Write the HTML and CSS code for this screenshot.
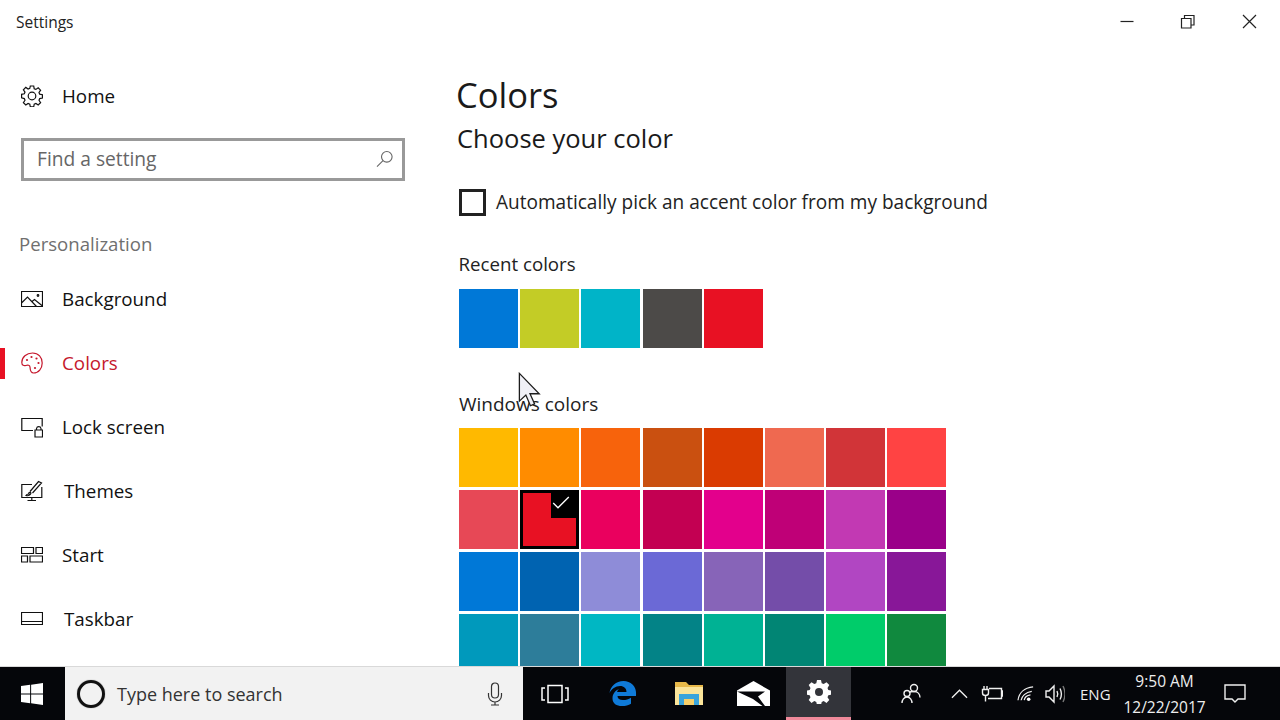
FILE: index.html
```html
<!DOCTYPE html>
<html lang="en">
<head>
<meta charset="utf-8">
<title>Settings</title>
<link rel="stylesheet" href="styles.css">
</head>
<body>
<div class="screen">
  <div class="window">
    <header class="titlebar">
      <span class="app-title">Settings</span>
      <div class="win-controls">
        <svg class="win-btn" viewBox="0 0 62 45"><path d="M26.500 22.500h13" /></svg>
        <svg class="win-btn" viewBox="0 0 62 45"><path d="M25.500 19.500h9.500v9.500h-9.500zM28.500 19v-2.500h9.500v9.500h-3" /></svg>
        <svg class="win-btn" viewBox="0 0 62 45"><path d="M25 16l13 13M38 16l-13 13" /></svg>
      </div>
    </header>
    <div class="body">
      <nav class="sidebar">
        <div class="nav-item home">
          <svg class="nav-icon" viewBox="0 0 22 22"><path d="M9.300 1h3.400l.5 2.700 1.700.7 2.300-1.600 2.400 2.400-1.600 2.300.7 1.700 2.700.5v3.400l-2.700.5-.7 1.700 1.600 2.300-2.400 2.400-2.300-1.600-1.700.7-.5 2.700H9.300l-.5-2.700-1.700-.7-2.300 1.600-2.400-2.400 1.600-2.300-.7-1.700L.6 12.700V9.300l2.700-.5.7-1.700-1.600-2.300 2.400-2.400 2.300 1.600 1.700-.7z"/><circle cx="11" cy="11" r="3.800"/></svg>
          <span>Home</span>
        </div>
        <div class="search">
          <span class="search-text">Find a setting</span>
          <svg class="search-icon" viewBox="0 0 18 18"><circle cx="10.800" cy="6.800" r="5.300"/><path d="M7 10.600L1 16.600"/></svg>
        </div>
        <div class="section-label">Personalization</div>
        <div class="nav-item">
          <svg class="nav-icon" viewBox="0 0 22 22"><path d="M.5 3.500h21v15H.5zM.5 15l6-6 9 9.500M11 13.500l2.500-2 8 6.500"/><circle cx="17" cy="7.500" r=".8"/></svg>
          <span>Background</span>
        </div>
        <div class="nav-item active">
          <svg class="nav-icon" viewBox="0 0 22 22"><path d="M11.500 1C5.500 1 .8 5 .8 10.500c0 3 2.400 3.500 4 3 2-.6 4-.5 4.200 1.500.2 2 0 6 3.500 6 5 0 8.700-4.500 8.700-10S17.500 1 11.500 1z"/><circle cx="6" cy="8" r="1.100" class="dot"/><circle cx="10.500" cy="5" r="1.100" class="dot"/><circle cx="15.500" cy="6.500" r="1.100" class="dot"/><circle cx="17.500" cy="11" r="1.100" class="dot"/><circle cx="14" cy="16" r="1.100" class="dot"/></svg>
          <span>Colors</span>
        </div>
        <div class="nav-item">
          <svg class="nav-icon" viewBox="0 0 22 22"><path d="M12 14.500H.8V2.500h20.400v8"/><path d="M14 14h7.500v7H14zM15.500 14v-1.500a2.300 2.300 0 0 1 4.500 0V14"/></svg>
          <span>Lock screen</span>
        </div>
        <div class="nav-item themes">
          <svg class="nav-icon" viewBox="0 0 22 22"><path d="M11 4.500H.8v13h20V7M10.800 17.500v3M6.500 20.500h8.500"/><path d="M8 14c-2 0-2.800 1-3 1.500 1 .3 3.500 0 4.500-1.300 1-1.200 0-2.400-1.200-1.600-.7.500-.8 1-.3 1.400zM9 11.500l8.500-10 3 1.500-9 10"/></svg>
          <span>Themes</span>
        </div>
        <div class="nav-item">
          <svg class="nav-icon" viewBox="0 0 22 22"><path d="M.5 3.500h12v6H.5zM15 3.500h6.500v6H15zM.5 12h6v6h-6zM9 12h12.500v6H9z"/></svg>
          <span>Start</span>
        </div>
        <div class="nav-item taskbar-item">
          <svg class="nav-icon" viewBox="0 0 22 22"><path d="M.5 4.500h21v12H.5zM.5 13.500h21"/></svg>
          <span>Taskbar</span>
        </div>
      </nav>
      <main class="content">
        <h1>Colors</h1>
        <h2>Choose your color</h2>
        <label class="auto-row">
          <span class="checkbox"></span>
          <span>Automatically pick an accent color from my background</span>
        </label>
        <div class="label recent-label">Recent colors</div>
        <div class="recent">
          <i style="background:#0078d7"></i><i style="background:#c3cc26"></i><i style="background:#00b4c8"></i><i style="background:#4c4a48"></i><i style="background:#e81123"></i>
        </div>
        <div class="label windows-label">Windows colors</div>
        <div class="palette">
          <i style="background:#ffb900"></i><i style="background:#ff8c00"></i><i style="background:#f7630c"></i><i style="background:#ca5010"></i><i style="background:#da3b01"></i><i style="background:#ef6950"></i><i style="background:#d13438"></i><i style="background:#ff4343"></i>
          <i style="background:#e74856"></i>
          <i class="selected"><b></b><svg viewBox="0 0 30 30"><path d="M2 15l8 8L28 5" /></svg></i>
          <i style="background:#ea005e"></i><i style="background:#c30052"></i><i style="background:#e3008c"></i><i style="background:#bf0077"></i><i style="background:#c239b3"></i><i style="background:#9a0089"></i>
          <i style="background:#0078d7"></i><i style="background:#0063b1"></i><i style="background:#8e8cd8"></i><i style="background:#6b69d6"></i><i style="background:#8764b8"></i><i style="background:#744da9"></i><i style="background:#b146c2"></i><i style="background:#881798"></i>
          <i style="background:#0099bc"></i><i style="background:#2d7d9a"></i><i style="background:#00b7c3"></i><i style="background:#038387"></i><i style="background:#00b294"></i><i style="background:#018574"></i><i style="background:#00cc6a"></i><i style="background:#10893e"></i>
        </div>
      </main>
    </div>
    <svg class="cursor" viewBox="0 0 26 40"><path d="M1.500 1.500v30l7-6.500 5 11.500 4.500-2-5-11h10z"/></svg>
  </div>
  <footer class="taskbar">
    <div class="start">
      <svg viewBox="0 0 20 20"><path d="M0 2.800l8.300-1.200v8H0zM9.200 1.500L20 0v9.600H9.200zM0 10.500h8.300v8L0 17.300zM9.200 10.500H20V20L9.200 18.500z"/></svg>
    </div>
    <div class="tb-search">
      <span class="cortana"></span>
      <span class="tb-search-text">Type here to search</span>
      <svg class="mic" viewBox="0 0 16 24"><rect x="4.500" y="1" width="7" height="15" rx="3.500"/><path d="M1.500 11v2.500a6.500 6.500 0 0 0 13 0V11M8 20v3M4 23h8"/></svg>
    </div>
    <div class="task task-view">
      <svg class="tray-line" viewBox="0 0 28 20"><path d="M7 1.500h14v17H7zM4 4H1v12h3M24 4h3v12h-3" /></svg>
    </div>
    <div class="task">
      <svg class="edge" viewBox="0 0 28 28"><path d="M14.500 1C7 1 1.500 6 .5 13c2-4 6-7 10.500-7 4 0 6.500 2.500 6.500 6H8c.5-1.200 1-2.200 2-3-4 1.500-6.500 5-6.500 9.500 0 5 4 7.500 9.500 7.500 3.500 0 6.500-.8 9-2.300v-6c-2.500 1.600-5 2.300-8 2.300-3.500 0-5.500-1.500-5.500-4H27c.5-6-1-9-3.500-11.500C21.300 2.300 18 1 14.500 1z"/></svg>
    </div>
    <div class="task">
      <svg class="folder" viewBox="0 0 28 24"><path fill="#e8b94a" d="M0 0h11l3 3h14v4H0z"/><path fill="#fbe49a" d="M0 5h28v18H0z"/><path fill="#3aa4dc" d="M4 12h20v11h-5v-6H9v6H4z"/><path fill="#f7cf6a" d="M9 17h10v6H9z"/></svg>
    </div>
    <div class="task">
      <svg class="mail" viewBox="0 0 33 25"><path fill="#fff" d="M0 9.500L16.500 0 33 9.500V25H0z"/><path fill="#05060a" d="M0 10.500L28 10.500 21 15.500 28 25 25.500 25 16 18z"/></svg>
    </div>
    <div class="task current">
      <svg class="gear" viewBox="0 0 24 24"><path fill-rule="evenodd" d="M10 0h4l.7 3.300 2 .8 2.800-1.800 2.800 2.800-1.800 2.800.8 2 3.300.7v4l-3.300.7-.8 2 1.800 2.800-2.800 2.800-2.800-1.800-2 .8-.7 3.300h-4l-.7-3.300-2-.8-2.800 1.800-2.800-2.800 1.800-2.800-.8-2-3.300-.7v-4l3.300-.7.8-2-1.800-2.800 2.800-2.800 2.800 1.800 2-.8zM12 8a4 4 0 1 0 0 8 4 4 0 0 0 0-8z"/></svg>
    </div>
    <div class="tray">
      <svg class="t-people" viewBox="0 0 20 22"><circle cx="13" cy="5" r="3.500"/><circle cx="6" cy="10.500" r="3"/><path d="M8 9.500c.5-.5 2-1 5-1 4 0 6 3 6 6M1 20c0-3 2-6 5-6s5 3 5 6"/></svg>
      <svg class="t-chev" viewBox="0 0 18 10"><path d="M1 9l8-8 8 8"/></svg>
      <svg class="t-batt" viewBox="0 0 22 18"><path d="M8 3.500h12.500v10H7M20.500 6h1v5h-1M3 1v3.500M6 1v3.500M1.500 4.500h6v3.500c0 1.500-1.500 2.500-3 2.500s-3-1-3-2.500zM4.500 10.500v6"/></svg>
      <svg class="t-wifi" viewBox="0 0 20 18"><path d="M1 16C2 8 8 2 18 1M4.500 16c.7-4.500 5-9 12-10M8 16c.5-3 3-5.500 7-6"/><circle cx="13" cy="15" r="2" class="fill"/></svg>
      <svg class="t-vol" viewBox="0 0 20 20"><path d="M1 7h3l5-5v16l-5-5H1zM12 7c1 2 1 4 0 6M15 4.500c1.800 3.500 1.800 7.500 0 11"/><path class="faint" d="M18 2c2.500 5 2.500 11 0 16"/></svg>
      <span class="eng">ENG</span>
      <div class="clock"><span>9:50 AM</span><span>12/22/2017</span></div>
      <svg class="t-note" viewBox="0 0 22 20"><path d="M1 1h20v14h-7l-3 3-3-3H1z"/></svg>
    </div>
  </footer>
</div>
</body>
</html>
```
FILE: styles.css
```css
* { box-sizing: border-box; }
html, body { margin: 0; padding: 0; }
body { font-family: "Open Sans", "Noto Sans", sans-serif; color: #111; background: #fff; }
.screen { width: 1280px; height: 720px; display: flex; flex-direction: column; overflow: hidden; }
.window { position: relative; flex: 1; min-height: 0; display: flex; flex-direction: column; overflow: hidden; background: #fff; border-bottom: 1px solid #d9d9d9; }
.titlebar { height: 43px; margin-bottom: 2px; flex: none; display: flex; align-items: center; justify-content: space-between; padding-left: 16px; }
.app-title { font-size: 15.500px; color: #222; }
.win-controls { display: flex; }
.win-btn { width: 62px; height: 45px; fill: none; stroke: #222; stroke-width: 1.200; }
.body { flex: 1; display: flex; min-height: 0; }
.sidebar { width: 437px; flex: none; }
.nav-item { height: 64px; display: flex; align-items: center; gap: 19px; padding-left: 21px; font-size: 18.800px; color: #111; position: relative; }
.nav-item.themes { gap: 21px; }
.nav-item.taskbar-item { gap: 21px; }
.nav-item.home { height: 42px; margin-top: 30px; }
.nav-icon { width: 22px; height: 22px; fill: none; stroke: #111; stroke-width: 1.200; flex: none; }
.nav-item.active { color: #c5172c; }
.nav-item.active .nav-icon { stroke: #c5172c; }
.nav-icon .dot { fill: #c5172c; stroke: none; }
.nav-item.active::before { content: ""; position: absolute; left: 0; top: 17px; width: 5px; height: 31px; background: #e81123; }
.search { margin: 21px 0 0 21px; width: 384px; height: 43px; border: 3px solid #999; display: flex; align-items: center; justify-content: space-between; padding: 0 8px 2px 13px; font-size: 19.200px; color: #666; }
.search-icon { width: 18px; height: 18px; fill: none; stroke: #666; stroke-width: 1.100; }
.section-label { margin: 50px 0 10px 19px; font-size: 18.600px; line-height: 26px; color: #6f6f6f; }
.content { flex: 1; padding-left: 20px; min-width: 0; }
h1 { margin: 22px 0 0 -1px; font-size: 34.500px; font-weight: 400; line-height: 56px; color: #1a1a1a; }
h2 { margin: -2px 0 0 0; font-size: 25.500px; font-weight: 400; line-height: 34px; color: #1a1a1a; }
.auto-row { display: flex; align-items: center; gap: 10px; margin: 33px 0 0 2px; font-size: 19.050px; line-height: 28px; color: #222; }
.checkbox { width: 27px; height: 27px; border: 3px solid #222; flex: none; }
.label { margin-left: 2px; font-size: 18.700px; line-height: 26px; color: #222; }
.recent-label { margin-top: 35px; margin-left: 1.500px; }
.recent { display: flex; gap: 2.200px; margin: 12px 0 0 2px; }
.recent i, .palette i { display: block; width: 59px; height: 59px; }
.windows-label { margin-top: 43px; font-size: 19px; }
.palette { display: grid; grid-template-columns: repeat(8, 59px); gap: 3px 2.200px; margin: 11px 0 0 2px; }
.palette .selected { position: relative; background: #e81123; border: 3px solid #000; }
.palette .selected b { position: absolute; right: -3px; top: -3px; width: 28px; height: 28px; background: #000; }
.palette .selected svg { position: absolute; right: 6px; top: 1px; width: 18px; height: 18px; fill: none; stroke: #fff; stroke-width: 2.200; }
.cursor { position: absolute; left: 518px; top: 372px; width: 24px; height: 37px; fill: #f0f0f6; stroke: #1c1c1c; stroke-width: 1.400; }
.taskbar { height: 53px; flex: none; background: #05060a; display: flex; align-items: stretch; color: #fff; }
.start { width: 65px; display: flex; align-items: center; justify-content: center; }
.start svg { width: 22px; height: 22px; fill: #fff; margin-left: -1px; }
.tb-search { width: 458px; background: #f2f2f2; display: flex; align-items: center; padding-left: 12px; color: #333; font-size: 18px; }
.cortana { width: 28px; height: 28px; border: 3.500px solid #111; border-radius: 50%; box-shadow: 0 0 1px #666; flex: none; }
.tb-search-text { margin-left: 12px; flex: 1; }
.mic { width: 16px; height: 24px; fill: none; stroke: #333; stroke-width: 1.200; margin-right: 20px; }
.task { width: 65px; display: flex; align-items: center; justify-content: center; }
.task-view { width: 63px; margin-right: 5px; }
.tray-line { width: 28px; height: 20px; fill: none; stroke: #fff; stroke-width: 1.500; }
.edge { width: 28px; height: 28px; fill: #0f7ad8; margin-left: -1px; }
.folder { width: 28px; height: 24px; }
.mail { width: 33px; height: 25px; }
.current { background: #33343a; border-bottom: 3px solid #f0899a; }
.gear { width: 24px; height: 24px; fill: #fff; }
.tray { flex: 1; position: relative; display: flex; align-items: center; }
.tray svg { stroke-width: 1.400; fill: none; stroke: #f0f0f0; flex: none; }
.t-people { width: 20px; height: 22px; margin-left: 50px; }
.t-chev { width: 17px; height: 10px; margin-left: 30px; }
.t-batt { width: 22px; height: 18px; margin-left: 13px; }
.t-wifi { width: 18px; height: 16px; margin-left: 14px; }
.t-wifi .fill { fill: #fff; stroke: none; }
.t-vol { width: 20px; height: 20px; margin-left: 10px; }
.t-vol .faint { stroke: #777; }
.eng { margin-left: 15px; font-size: 15px; color: #eee; }
.clock { width: 92px; margin-left: 8px; display: flex; flex-direction: column; align-items: center; font-size: 15.500px; line-height: 26px; color: #eee; }
.t-note { width: 22px; height: 20px; margin-left: 13px; }
```
